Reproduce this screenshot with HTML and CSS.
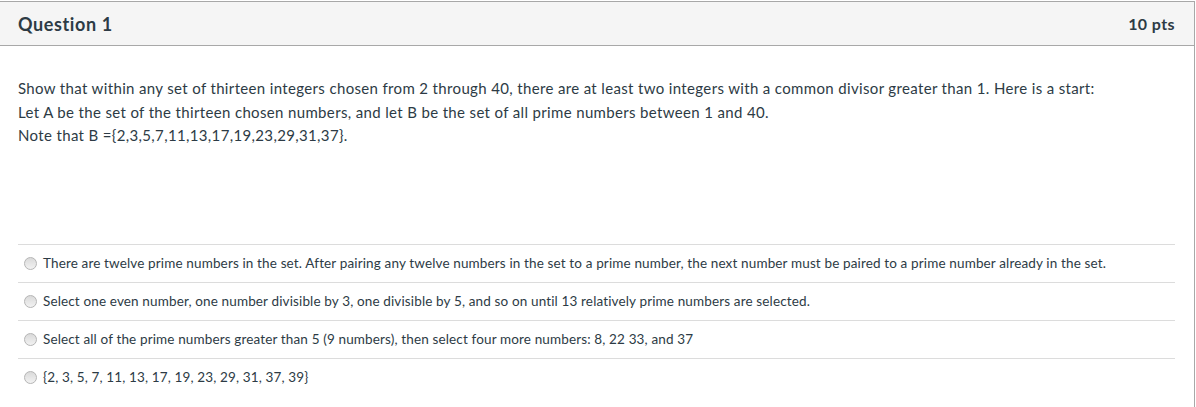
FILE: index.html
```html
<!DOCTYPE html>
<html>
<head>
<meta charset="utf-8">
<link rel="stylesheet" href="styles.css">
</head>
<body>
<div class="question">
  <div class="header">
    <h2 class="title">Question 1</h2>
    <span class="pts">10 pts</span>
  </div>
  <div class="content">
    <div class="text">
      <p>Show that within any set of thirteen integers chosen from 2 through 40, there are at least two integers with a common divisor greater than 1. Here is a start:</p>
      <p>Let A be the set of the thirteen chosen numbers, and let B be the set of all prime numbers between 1 and 40.</p>
      <p>Note that B ={2,3,5,7,11,13,17,19,23,29,31,37}.</p>
    </div>
    <div class="answers">
      <label class="answer"><span class="radio"></span><span class="label">There are twelve prime numbers in the set. After pairing any twelve numbers in the set to a prime number, the next number must be paired to a prime number already in the set.</span></label>
      <label class="answer"><span class="radio"></span><span class="label">Select one even number, one number divisible by 3, one divisible by 5, and so on until 13 relatively prime numbers are selected.</span></label>
      <label class="answer"><span class="radio"></span><span class="label">Select all of the prime numbers greater than 5 (9 numbers), then select four more numbers: 8, 22 33, and 37</span></label>
      <label class="answer"><span class="radio"></span><span class="label">{2, 3, 5, 7, 11, 13, 17, 19, 23, 29, 31, 37, 39}</span></label>
    </div>
  </div>
</div>
</body>
</html>
```
FILE: styles.css
```css
html, body {
  margin: 0;
  padding: 0;
  background: #ffffff;
}
body {
  font-family: Lato, "Liberation Sans", sans-serif;
  color: #2d3b45;
}
.question {
  margin-top: 1px;
  width: 1194px;
  border-top: 1px solid #a8a8a8;
  border-right: 1px solid #a8a8a8;
}
.header {
  display: flex;
  align-items: center;
  justify-content: space-between;
  height: 43px;
  padding: 0 19px 0 18px;
  background: #f5f5f5;
  border-bottom: 1px solid #a8a8a8;
}
.title {
  margin: 0;
  font-size: 18px;
  font-weight: 700;
  letter-spacing: 0.6px;
  color: #2d3b45;
}
.pts {
  font-size: 16px;
  font-weight: 700;
  letter-spacing: 0.4px;
  color: #2d3b45;
}
.content {
  padding: 31px 19px 12px 18px;
}
.text p {
  margin: 0;
  font-size: 15px;
  letter-spacing: 0.35px;
  line-height: 23.5px;
}
.answers {
  margin-top: 96px;
}
.answer {
  display: flex;
  align-items: center;
  height: 37px;
  border-top: 1px solid #dcdcdc;
  font-size: 13.5px;
  letter-spacing: 0.14px;
}
.radio {
  width: 11px;
  height: 11px;
  border-radius: 50%;
  border: 1px solid #b5b5b5;
  background: linear-gradient(#dadada, #f2f2f2);
  margin: 0 6px 0 6px;
  flex: none;
}
.label {
  color: #2d3b45;
}
```
